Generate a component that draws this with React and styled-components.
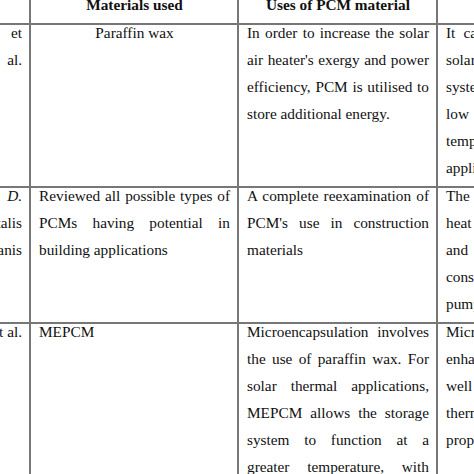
import React from 'react';
import styled, { createGlobalStyle } from 'styled-components';

// --- ГЛОБАЛЬНЫЕ СТИЛИ ---
const GlobalStyle = createGlobalStyle`
  html, body { margin: 0; padding: 0; background: #fff; overflow: hidden; }
  body { font-family: "Liberation Serif", "Times New Roman", serif; color: #111; }
`;

// --- ДАННЫЕ ТАБЛИЦЫ ---
const columns = [
  { key: 'author', title: 'Author', width: 140 },
  { key: 'material', title: 'Materials used', width: 208 },
  { key: 'use', title: 'Uses of PCM material', width: 199 },
  { key: 'outcome', title: 'Outcome', width: 200 },
];
const tableWidth = columns.reduce((sum, c) => sum + c.width, 0);

const rows = [
  {
    id: 1,
    author: ['Kareem et', 'al.'],
    material: ['Paraffin wax'],
    materialCentered: true,
    use: [
      'In order to increase the solar',
      "air heater's exergy and power",
      'efficiency, PCM is utilised to',
      'store additional energy.',
    ],
    outcome: [
      'It can be employed for the',
      'solar water heating',
      'systems, especially at',
      'low and moderate',
      'temperature',
      'applications.',
    ],
  },
  {
    id: 2,
    author: ['Kyriaki D.', 'Menoufi Kontalis', 'Tsoukanis'],
    italicFirst: true,
    material: [
      'Reviewed all possible types of',
      'PCMs having potential in',
      'building applications',
    ],
    use: [
      'A complete reexamination of',
      "PCM's use in construction",
      'materials',
    ],
    outcome: [
      'The PCM stores latent',
      'heat during the day',
      'and reduces energy',
      'consumption of heat',
      'pumps in buildings.',
    ],
  },
  {
    id: 3,
    author: ['Sharma et al.'],
    material: ['MEPCM'],
    use: [
      'Microencapsulation involves',
      'the use of paraffin wax. For',
      'solar thermal applications,',
      'MEPCM allows the storage',
      'system to function at a',
      'greater temperature, with',
      'lower heat losses.',
    ],
    outcome: [
      'Microcapsules',
      'enhanced heat transfer as',
      'well as the overall',
      'thermal storage',
      'properties of the system.',
    ],
  },
];

// --- СТИЛИЗОВАННЫЕ КОМПОНЕНТЫ ---
const Viewport = styled.div`
  width: 474px; height: 474px; overflow: hidden; background: #fff;
`;
const Table = styled.table`
  width: ${p => p.$width}px;
  border-collapse: collapse; table-layout: fixed; margin: -5px 0 0 -111px;
  font-size: 15.3px; line-height: 27px;
`;
const HeadCell = styled.th`
  border: 2px solid #777; padding: 0 7px 0 8px; font-weight: 700; text-align: center; vertical-align: top;
`;
const Cell = styled.td`
  border: 2px solid #777; padding: 0 7px 0 8px; vertical-align: top; font-weight: 400;
`;
// текст в ячейке сидит чуть выше середины строки, как в исходном документе
const Stack = styled.div`
  margin: -6px 0 5px;
`;
const Line = styled.span`
  display: block; white-space: nowrap;
  text-align: ${p => p.$align}; text-align-last: ${p => p.$align};
`;

const alignFor = (i, total, last, centered) => {
  if (centered) return 'center';
  return i < total - 1 ? 'justify' : last;
};

const Lines = ({ items, last = 'left', centered = false, italicFirst = false }) => (
  <Stack>
    {items.map((text, i) => {
      const align = alignFor(i, items.length, last, centered);
      if (italicFirst && i === 0) {
        const words = text.split(' ');
        const tail = words.pop();
        return (
          <Line key={i} $align={align}>
            {words.join(' ')} <i>{tail}</i>
          </Line>
        );
      }
      return <Line key={i} $align={align}>{text}</Line>;
    })}
  </Stack>
);

export default function App() {
  return (
    <Viewport>
      <GlobalStyle />
      <Table $width={tableWidth}>
        <colgroup>
          {columns.map(c => <col key={c.key} width={c.width} />)}
        </colgroup>
        <thead>
          <tr>
            {columns.map(c => (
              <HeadCell key={c.key}><Lines items={[c.title]} centered /></HeadCell>
            ))}
          </tr>
        </thead>
        <tbody>
          {rows.map(row => (
            <tr key={row.id}>
              <Cell><Lines items={row.author} last="right" italicFirst={row.italicFirst} /></Cell>
              <Cell><Lines items={row.material} centered={row.materialCentered} /></Cell>
              <Cell><Lines items={row.use} /></Cell>
              <Cell><Lines items={row.outcome} /></Cell>
            </tr>
          ))}
        </tbody>
      </Table>
    </Viewport>
  );
}
